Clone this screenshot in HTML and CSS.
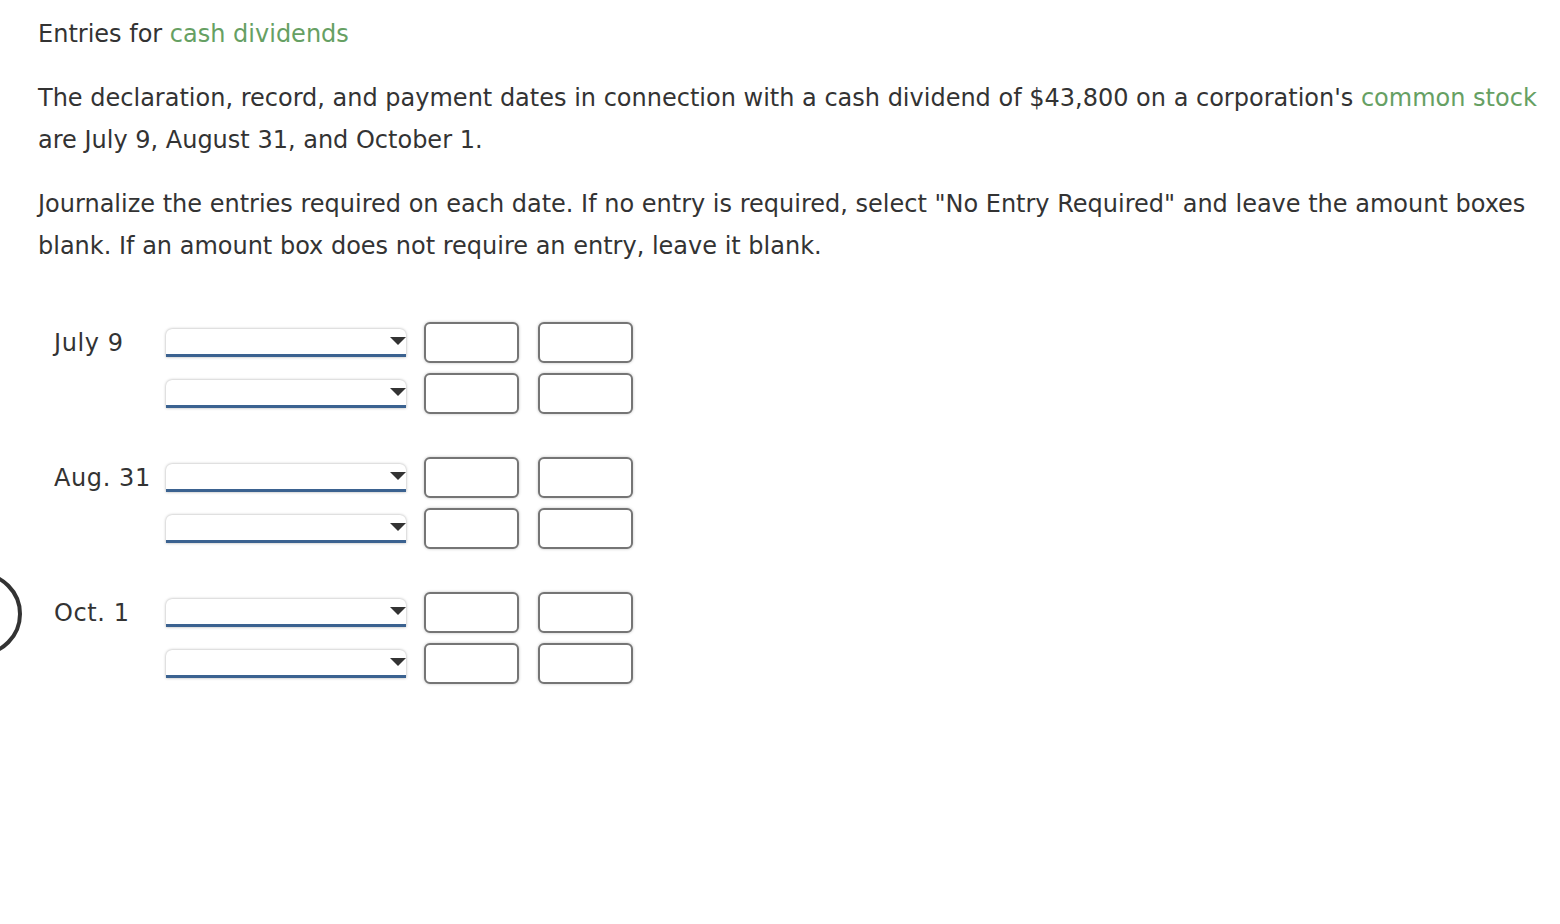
FILE: index.html
```html
<!DOCTYPE html>
<html lang="en">
<head>
    <meta charset="UTF-8">
    <meta name="viewport" content="width=device-width, initial-scale=1.0">
    <title>Entries for cash dividends</title>
    <link rel="stylesheet" href="styles.css">
</head>
<body>
    <div class="ring"></div>
    <div class="page">
        <p>Entries for <span class="term">cash dividends</span></p>
        <p>The declaration, record, and payment dates in connection with a cash dividend of $43,800 on a corporation's <span class="term">common stock</span> are July 9, August 31, and October 1.</p>
        <p>Journalize the entries required on each date. If no entry is required, select "No Entry Required" and leave the amount boxes blank. If an amount box does not require an entry, leave it blank.</p>

        <div class="journal">
            <div class="entry">
                <div class="date">July 9</div>
                <div class="lines">
                    <div class="line">
                        <div class="account"><span class="arrow"></span></div>
                        <input type="text" class="amount">
                        <input type="text" class="amount">
                    </div>
                    <div class="line">
                        <div class="account"><span class="arrow"></span></div>
                        <input type="text" class="amount">
                        <input type="text" class="amount">
                    </div>
                </div>
            </div>

            <div class="entry">
                <div class="date">Aug. 31</div>
                <div class="lines">
                    <div class="line">
                        <div class="account"><span class="arrow"></span></div>
                        <input type="text" class="amount">
                        <input type="text" class="amount">
                    </div>
                    <div class="line">
                        <div class="account"><span class="arrow"></span></div>
                        <input type="text" class="amount">
                        <input type="text" class="amount">
                    </div>
                </div>
            </div>

            <div class="entry">
                <div class="date">Oct. 1</div>
                <div class="lines">
                    <div class="line">
                        <div class="account"><span class="arrow"></span></div>
                        <input type="text" class="amount">
                        <input type="text" class="amount">
                    </div>
                    <div class="line">
                        <div class="account"><span class="arrow"></span></div>
                        <input type="text" class="amount">
                        <input type="text" class="amount">
                    </div>
                </div>
            </div>
        </div>
    </div>
</body>
</html>
```

FILE: styles.css
```css
body {
    margin: 0;
    padding: 0;
    background-color: #fff;
    color: #333;
    font-family: "DejaVu Sans", Verdana, sans-serif;
    font-size: 24px;
}
.page {
    padding: 13px 12px 0 38px;
}
p {
    margin: 0 0 22px 0;
    line-height: 42px;
}
.term {
    color: #66a063;
}
.ring {
    position: absolute;
    left: -62px;
    top: 572px;
    width: 76px;
    height: 76px;
    border: 4px solid #333;
    border-radius: 50%;
}
.journal {
    padding: 33px 0 0 16px;
}
.entry {
    display: flex;
    margin-bottom: 43px;
}
.date {
    width: 112px;
    height: 42px;
    line-height: 42px;
    letter-spacing: 0.6px;
}
.lines {
    display: flex;
    flex-direction: column;
    gap: 10px;
}
.line {
    display: flex;
    align-items: center;
}
.account {
    position: relative;
    width: 240px;
    height: 25px;
    margin-right: 18px;
    background-color: #fff;
    border-bottom: 3px solid #3b6290;
    border-radius: 6px 6px 0 0;
    box-shadow: 0 0 3px rgba(0, 0, 0, 0.35);
}
.arrow {
    position: absolute;
    right: 0;
    top: 8px;
    width: 0;
    height: 0;
    border-left: 8px solid transparent;
    border-right: 8px solid transparent;
    border-top: 8px solid #333;
}
.amount {
    box-sizing: border-box;
    width: 95px;
    height: 41px;
    margin: 0 19px 0 0;
    padding: 0;
    border: 2px solid #757575;
    border-radius: 6px;
    box-shadow: 0 0 3px rgba(0, 0, 0, 0.25);
    background-color: #fff;
}
```
